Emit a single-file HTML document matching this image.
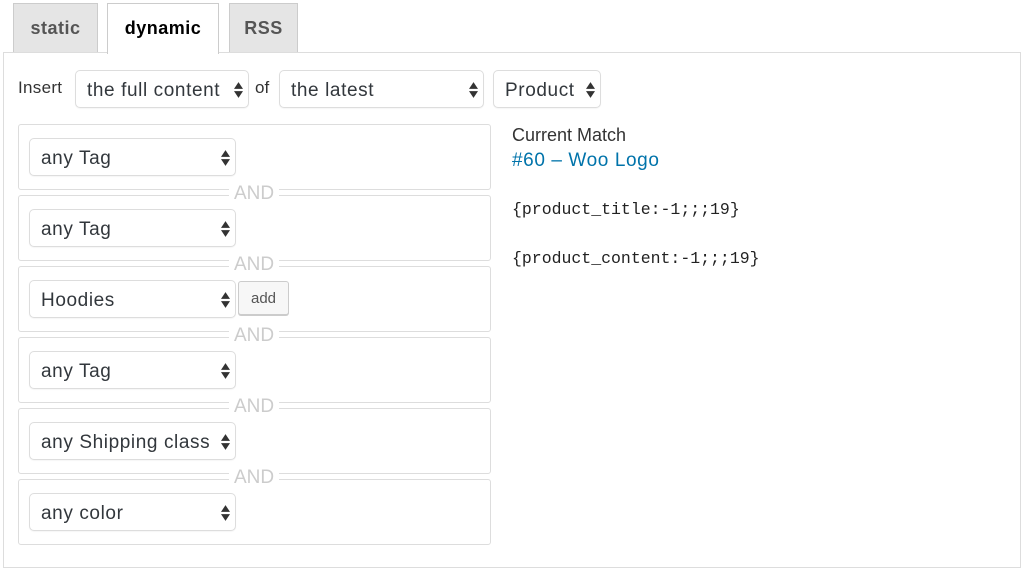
<!DOCTYPE html>
<html><head><meta charset="utf-8"><style>
*{box-sizing:border-box;margin:0;padding:0}
body{width:1024px;height:569px;background:#fff;position:relative;overflow:hidden;font-family:"Liberation Sans",Arial,sans-serif;color:#333}
.a{position:absolute}
.tab{position:absolute;top:3px;height:50px;background:#e5e5e5;border:1px solid #ccc;border-bottom:none;font-weight:bold;font-size:18px;color:#555;text-align:center;line-height:49px;letter-spacing:0.5px}
.tab.on{background:#fff;color:#000;height:51px;z-index:2}
.panel{position:absolute;left:3px;top:52px;width:1018px;height:516px;border:1px solid #ddd}
.sel{position:absolute;height:38px;border:1px solid #ddd;border-radius:5px;background:#fff;font-size:19px;color:#32373c;line-height:39px;padding-left:11px;white-space:nowrap;letter-spacing:0.6px;box-shadow:0 1px 1px rgba(0,0,0,.04)}
.arr{position:absolute;right:5px;top:11px;width:9px;height:16px}
.box{position:absolute;left:18px;width:473px;height:66px;border:1px solid #ddd;border-radius:3px}
.and{position:absolute;left:229px;width:50px;text-align:center;font-size:19px;color:#ccc;background:#fff;line-height:20px}
.mono{font-family:"Liberation Mono",monospace;font-size:16.5px;color:#222}
</style></head><body>
<div class="tab" style="left:13px;width:85px">static</div>
<div class="tab on" style="left:107px;width:112px">dynamic</div>
<div class="tab" style="left:229px;width:69px">RSS</div>
<div class="panel"></div>

<div class="a" style="left:18px;top:78px;font-size:17px;color:#333;letter-spacing:0.3px">Insert</div>
<div class="sel" style="left:75px;top:70px;width:174px">the full content<svg class="arr" viewBox="0 0 8 14"><path d="M0 6L4 0L8 6Z M0 8L4 14L8 8Z" fill="#333"/></svg></div>
<div class="a" style="left:255px;top:78px;font-size:17px">of</div>
<div class="sel" style="left:279px;top:70px;width:205px">the latest<svg class="arr" viewBox="0 0 8 14"><path d="M0 6L4 0L8 6Z M0 8L4 14L8 8Z" fill="#333"/></svg></div>
<div class="sel" style="left:493px;top:70px;width:108px">Product<svg class="arr" viewBox="0 0 8 14"><path d="M0 6L4 0L8 6Z M0 8L4 14L8 8Z" fill="#333"/></svg></div>

<div class="box" style="top:124px"></div>
<div class="box" style="top:195px"></div>
<div class="box" style="top:266px"></div>
<div class="box" style="top:337px"></div>
<div class="box" style="top:408px"></div>
<div class="box" style="top:479px"></div>
<div class="and" style="top:184px">AND</div>
<div class="and" style="top:255px">AND</div>
<div class="and" style="top:326px">AND</div>
<div class="and" style="top:397px">AND</div>
<div class="and" style="top:468px">AND</div>

<div class="sel" style="left:29px;top:138px;width:207px">any Tag<svg class="arr" viewBox="0 0 8 14"><path d="M0 6L4 0L8 6Z M0 8L4 14L8 8Z" fill="#333"/></svg></div>
<div class="sel" style="left:29px;top:209px;width:207px">any Tag<svg class="arr" viewBox="0 0 8 14"><path d="M0 6L4 0L8 6Z M0 8L4 14L8 8Z" fill="#333"/></svg></div>
<div class="sel" style="left:29px;top:280px;width:207px">Hoodies<svg class="arr" viewBox="0 0 8 14"><path d="M0 6L4 0L8 6Z M0 8L4 14L8 8Z" fill="#333"/></svg></div>
<div class="a" style="left:238px;top:281px;width:51px;height:34px;border:1px solid #ccc;border-radius:3px;background:#f7f7f7;box-shadow:0 1px 0 #ccc;font-size:15px;line-height:33px;text-align:center;color:#555">add</div>
<div class="sel" style="left:29px;top:351px;width:207px">any Tag<svg class="arr" viewBox="0 0 8 14"><path d="M0 6L4 0L8 6Z M0 8L4 14L8 8Z" fill="#333"/></svg></div>
<div class="sel" style="left:29px;top:422px;width:207px">any Shipping class<svg class="arr" viewBox="0 0 8 14"><path d="M0 6L4 0L8 6Z M0 8L4 14L8 8Z" fill="#333"/></svg></div>
<div class="sel" style="left:29px;top:493px;width:207px">any color<svg class="arr" viewBox="0 0 8 14"><path d="M0 6L4 0L8 6Z M0 8L4 14L8 8Z" fill="#333"/></svg></div>

<div class="a" style="left:512px;top:125px;font-size:18px;color:#333">Current Match</div>
<div class="a" style="left:512px;top:150px;font-size:19px;color:#0073aa;letter-spacing:0.6px">#60 – Woo Logo</div>
<div class="a mono" style="left:512px;top:200px">{product_title:-1;;;19}</div>
<div class="a mono" style="left:512px;top:249px">{product_content:-1;;;19}</div>
</body></html>
